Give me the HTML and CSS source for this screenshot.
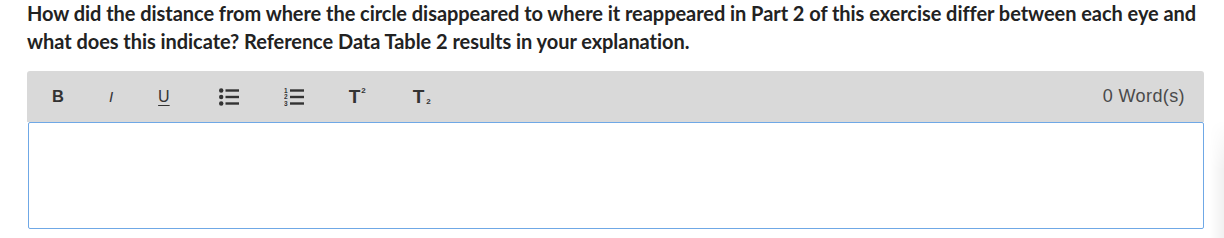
FILE: index.html
```html
<!doctype html>
<html lang="en">
<head>
<meta charset="UTF-8">
<title>Question</title>
<link rel="stylesheet" href="styles.css">
</head>
<body>
	<div class="question">
		<p class="prompt">How did the distance from where the circle disappeared to where it reappeared in Part 2 of this exercise differ between each eye and what does this indicate? Reference Data Table 2 results in your explanation.</p>
		<div class="editor">
			<div class="toolbar">
				<div class="tools">
					<span class="tool bold">B</span>
					<span class="tool italic">I</span>
					<span class="tool under">U</span>
					<span class="tool">
						<svg width="20" height="18" viewBox="0 0 20 18">
							<circle cx="2.2" cy="2.5" r="2.2" fill="#333"/>
							<circle cx="2.2" cy="9" r="2.2" fill="#333"/>
							<circle cx="2.2" cy="15.5" r="2.2" fill="#333"/>
							<rect x="6.5" y="1.3" width="13.5" height="2.4" fill="#333"/>
							<rect x="6.5" y="7.8" width="13.5" height="2.4" fill="#333"/>
							<rect x="6.5" y="14.3" width="13.5" height="2.4" fill="#333"/>
						</svg>
					</span>
					<span class="tool">
						<svg width="20" height="18" viewBox="0 0 20 18">
							<text x="0" y="5" font-size="6.5" font-weight="bold" font-family="Liberation Sans, sans-serif" fill="#333">1</text>
							<text x="0" y="11.3" font-size="6.5" font-weight="bold" font-family="Liberation Sans, sans-serif" fill="#333">2</text>
							<text x="0" y="17.6" font-size="6.5" font-weight="bold" font-family="Liberation Sans, sans-serif" fill="#333">3</text>
							<rect x="6" y="1.3" width="14" height="2.4" fill="#333"/>
							<rect x="6" y="7.8" width="14" height="2.4" fill="#333"/>
							<rect x="6" y="14.3" width="14" height="2.4" fill="#333"/>
						</svg>
					</span>
					<span class="tool tee">T<span class="sup">2</span></span>
					<span class="tool tee">T<span class="sub">2</span></span>
				</div>
				<div class="count">0 Word(s)</div>
			</div>
			<div class="area"></div>
		</div>
	</div>
	<div class="edge"></div>
</body>
</html>
```

FILE: styles.css
```css
* {margin:0;padding:0;}
body{background:#fff;font-family:"Liberation Sans",Arial,sans-serif;color:#333;}
.question{padding:0 20px 0 27px;}
.prompt{font-family:Lato,"Noto Sans",sans-serif;font-weight:700;font-size:20px;line-height:27.5px;color:#222;letter-spacing:-0.05px;}
.editor{margin-top:16px;width:1177px;}
.toolbar{height:51px;background:#d9d9d9;border-radius:3px 3px 0 0;display:flex;align-items:center;justify-content:space-between;padding:0 19px 0 25px;box-sizing:border-box;}
.tools{display:flex;align-items:center;gap:45px;}
.tool{display:flex;align-items:center;font-size:15px;color:#333;height:20px;}
.tool svg{display:block;}
.bold{font-weight:700;font-size:16.5px;}
.italic{font-style:italic;font-size:15px;}
.under{text-decoration:underline;text-underline-offset:3px;font-size:16px;margin-right:4px;}
.tee{font-weight:700;font-size:19px;position:relative;width:19px;}
.tee .sup{font-size:8px;position:relative;top:-6px;left:1px;}
.tee .sub{font-size:8px;position:relative;top:5px;left:2px;}
.count{font-size:18px;letter-spacing:0.4px;color:#4a4a4a;}
.area{height:105px;border:1px solid #6fa8e6;border-radius:2px;background:#fff;margin-left:1px;}
.edge{position:fixed;right:0;top:120px;bottom:0;width:14px;background:linear-gradient(to right,rgba(0,0,0,0),rgba(0,0,0,0.06));-webkit-mask-image:linear-gradient(to bottom,transparent,#000 50px);mask-image:linear-gradient(to bottom,transparent,#000 50px);}
```
